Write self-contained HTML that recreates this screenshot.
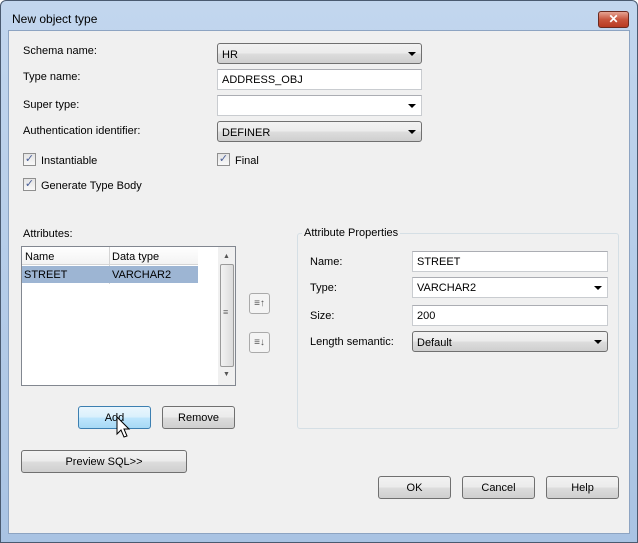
<!DOCTYPE html><html><head><style>
*{box-sizing:border-box}
body{margin:0;width:638px;height:543px;overflow:hidden;font-family:"Liberation Sans",sans-serif;font-size:11px;color:#000;background:#fff}
.win{position:absolute;left:0;top:0;width:638px;height:543px;background:linear-gradient(#c2d6ee,#a9c3e3);border:1px solid #4a5a70;border-radius:6px 6px 0 0}
.title{position:absolute;left:11px;top:11px;font-size:12px;color:#000}
.close{position:absolute;left:597px;top:10px;width:31px;height:17px;border:1px solid #6b2a20;border-radius:3px;background:linear-gradient(#e6a493,#c8553e 50%,#b83a22);color:#fff;font-weight:bold;font-size:12px;text-align:center;line-height:15px}
.client{position:absolute;left:8px;top:30px;width:622px;height:504px;background:#f0f0f0;border:1px solid #8da4c2}
.a{position:absolute}
.lbl{position:absolute;font-size:11px}
.in{position:absolute;background:#fff;border:1px solid #c9ccd0;border-top-color:#abadb3;height:21px;padding:4px 0 0 4px;font-size:11px}
.cb{position:absolute;height:21px;border:1px solid #707070;border-radius:3px;background:linear-gradient(#f2f2f2,#ebebeb 50%,#dddddd 51%,#cfcfcf);padding:5px 0 0 4px;font-size:11px}
.arr{position:absolute;right:5px;top:8px;width:0;height:0;border-left:4px solid transparent;border-right:4px solid transparent;border-top:4px solid #000}
.chk{position:absolute;width:13px;height:13px;border:1px solid #8f8f8f;background:linear-gradient(#e4e4e4,#f8f8f8);font-size:11px;line-height:11px;text-align:center;color:#4a5f97}
.btn{position:absolute;border:1px solid #707070;border-radius:3px;background:linear-gradient(#f2f2f2,#ebebeb 50%,#dddddd 51%,#cfcfcf);text-align:center;font-size:11px;padding-top:1px}
</style></head><body>
<div class="win">
<div class="title">New object type</div>
<div class="close">✕</div>
</div>
<div class="client"></div>

<div class="lbl" style="left:23px;top:45px">Schema name:</div>
<div class="cb" style="left:217px;top:43px;width:205px">HR<div class="arr"></div></div>
<div class="lbl" style="left:23px;top:71px">Type name:</div>
<div class="in" style="left:217px;top:69px;width:205px">ADDRESS_OBJ</div>
<div class="lbl" style="left:23px;top:99px">Super type:</div>
<div class="in" style="left:217px;top:95px;width:205px"><div class="arr"></div></div>
<div class="lbl" style="left:23px;top:125px">Authentication identifier:</div>
<div class="cb" style="left:217px;top:121px;width:205px">DEFINER<div class="arr"></div></div>

<div class="chk" style="left:23px;top:153px">✓</div><div class="lbl" style="left:41px;top:155px">Instantiable</div>
<div class="chk" style="left:217px;top:153px">✓</div><div class="lbl" style="left:235px;top:155px">Final</div>
<div class="chk" style="left:23px;top:178px">✓</div><div class="lbl" style="left:41px;top:180px">Generate Type Body</div>

<div class="lbl" style="left:23px;top:228px">Attributes:</div>
<div class="a" style="left:21px;top:246px;width:215px;height:140px;background:#fff;border:1px solid #828790">
 <div class="a" style="left:0;top:0;width:176px;height:18px;background:linear-gradient(#fff,#f3f3f3);border-bottom:1px solid #d5d5d5"></div>
 <div class="lbl" style="left:3px;top:4px">Name</div>
 <div class="a" style="left:87px;top:0;width:1px;height:37px;background:#d5d5d5"></div>
 <div class="lbl" style="left:90px;top:4px">Data type</div>
 <div class="a" style="left:0;top:19px;width:176px;height:17px;background:#9db5d3"></div>
 <div class="lbl" style="left:2px;top:22px">STREET</div>
 <div class="lbl" style="left:90px;top:22px">VARCHAR2</div>
 <div class="a" style="left:196px;top:0;width:17px;height:138px;background:#f0f0f0"></div>
 <div class="a" style="left:198px;top:17px;width:14px;height:103px;border:1px solid #9a9a9a;border-radius:2px;background:linear-gradient(90deg,#f2f2f2,#dcdcdc)"></div>
 <div class="lbl" style="left:201px;top:6px;font-size:7px;color:#555">▲</div>
 <div class="lbl" style="left:201px;top:124px;font-size:7px;color:#555">▼</div>
 <div class="lbl" style="left:201px;top:60px;font-size:9px;color:#666">≡</div>
</div>
<div class="btn" style="left:249px;top:293px;width:21px;height:21px;border-color:#aaa;background:#f4f4f4;font-size:10px;line-height:18px;color:#555">≡↑</div>
<div class="btn" style="left:249px;top:332px;width:21px;height:21px;border-color:#aaa;background:#f4f4f4;font-size:10px;line-height:18px;color:#555">≡↓</div>

<div class="btn" style="left:78px;top:406px;width:73px;height:23px;line-height:20px;border-color:#3c7fb1;background:linear-gradient(#eaf6fd,#d9f0fc 50%,#bee6fd 51%,#a7d9f5)">Add</div>
<div class="btn" style="left:162px;top:406px;width:73px;height:23px;line-height:20px">Remove</div>
<svg class="a" style="left:116px;top:416px" width="18" height="26" viewBox="0 0 18 26"><path d="M1 1 L1 18 L5 14 L8 21 L11 20 L8 13 L13 13 Z" fill="#fff" stroke="#000" stroke-width="1"/></svg>
<div class="btn" style="left:21px;top:450px;width:166px;height:23px;line-height:20px">Preview SQL&gt;&gt;</div>

<div class="a" style="left:297px;top:233px;width:322px;height:196px;border:1px solid #d5dfe5;border-radius:3px"></div>
<div class="lbl" style="left:302px;top:227px;background:#f0f0f0;padding:0 2px">Attribute Properties</div>
<div class="lbl" style="left:310px;top:256px">Name:</div>
<div class="in" style="left:412px;top:251px;width:196px">STREET</div>
<div class="lbl" style="left:310px;top:282px">Type:</div>
<div class="in" style="left:412px;top:277px;width:196px">VARCHAR2<div class="arr"></div></div>
<div class="lbl" style="left:310px;top:310px">Size:</div>
<div class="in" style="left:412px;top:305px;width:196px">200</div>
<div class="lbl" style="left:310px;top:336px">Length semantic:</div>
<div class="cb" style="left:412px;top:331px;width:196px">Default<div class="arr"></div></div>

<div class="btn" style="left:378px;top:476px;width:73px;height:23px;line-height:20px">OK</div>
<div class="btn" style="left:462px;top:476px;width:73px;height:23px;line-height:20px">Cancel</div>
<div class="btn" style="left:546px;top:476px;width:73px;height:23px;line-height:20px">Help</div>
</body></html>
